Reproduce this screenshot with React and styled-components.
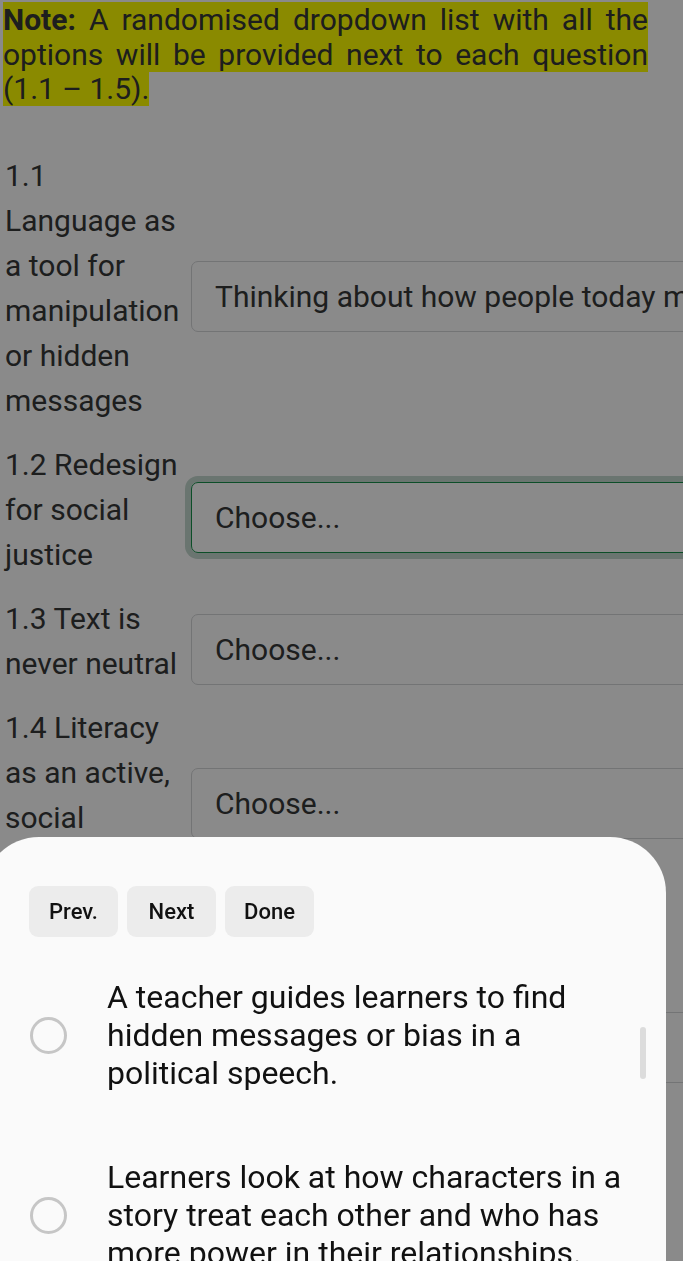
import React from 'react'
import styled, {createGlobalStyle} from 'styled-components'

const GlobalStyle = createGlobalStyle`
	html, body{
		margin: 0;
		padding: 0;
		background: #fff;
		overflow: hidden;
		font-family: Roboto, "Liberation Sans", sans-serif;
	}
`

const Page = styled.div`
	padding: 3px 0 0 3px;
	width: 900px;
	color: #363838;
`

const Note = styled.p`
	width: 645px;
	margin: 0 0 46px 0;
	font-size: 30px;
	line-height: 34.7px;
	text-align: justify;
	mark{
		background: #ffff00;
		color: inherit;
	}
`

const Questions = styled.div`
	display: flex;
	flex-direction: column;
	gap: 19px;
`

const Row = styled.div`
	display: flex;
	align-items: center;
`

const Label = styled.div`
	width: 182px;
	margin-right: 4px;
	padding-left: 2px;
	font-size: 30px;
	line-height: 45px;
`

const Select = styled.div`
	box-sizing: border-box;
	width: 620px;
	height: 71px;
	margin-top: 16px;
	display: flex;
	align-items: center;
	padding-left: 23px;
	border: 1px solid ${p => p.focused ? '#17904a' : '#d4d6d8'};
	border-radius: 7px;
	font-size: 30px;
	white-space: nowrap;
	overflow: hidden;
	box-shadow: ${p => p.focused ? '0 0 0 6px #c4d8cf' : 'none'};
`

const Backdrop = styled.div`
	position: fixed;
	inset: 0;
	background: rgba(0, 0, 0, 0.46);
`

const Sheet = styled.div`
	position: fixed;
	left: -17px;
	top: 837px;
	bottom: 0;
	width: 683px;
	box-sizing: border-box;
	padding: 49px 0 0 46px;
	background: #fafafa;
	border-radius: 56px 56px 0 0;
	color: #111;
`

const Toolbar = styled.div`
	display: flex;
	gap: 9px;
	margin-bottom: 8px;
`

const ToolButton = styled.button`
	width: 89px;
	height: 51px;
	border: none;
	border-radius: 9px;
	background: #ececec;
	color: #111;
	font-family: Roboto, "Liberation Sans", sans-serif;
	font-size: 22px;
	font-weight: 500;
	padding: 0;
`

const Option = styled.label`
	display: flex;
	align-items: center;
	padding: 33px 0;
`

const Radio = styled.span`
	box-sizing: border-box;
	flex: none;
	width: 37px;
	height: 37px;
	margin-left: 1px;
	border: 3px solid #c6c6c6;
	border-radius: 50%;
`

const OptionText = styled.span`
	width: 525px;
	margin-left: 40px;
	font-size: 32px;
	line-height: 38px;
`

const Thumb = styled.div`
	position: absolute;
	left: 657px;
	top: 190px;
	width: 6px;
	height: 52px;
	border-radius: 3px;
	background: #dcdcdc;
`

const questions = [
	{label: '1.1 Language as a tool for manipulation or hidden messages', value: 'Thinking about how people today might be influenced by what they read'},
	{label: '1.2 Redesign for social justice', value: 'Choose...', focused: true},
	{label: '1.3 Text is never neutral', value: 'Choose...'},
	{label: '1.4 Literacy as an active, social practice', value: 'Choose...'},
	{label: '1.5 Critical literacy and power relations in texts and society', value: 'Choose...'},
]

const options = [
	'A teacher guides learners to find hidden messages or bias in a political speech.',
	'Learners look at how characters in a story treat each other and who has more power in their relationships.',
]

export default function App(){
	return <>
		<GlobalStyle />
		<Page>
			<Note><mark><b>Note:</b> A randomised dropdown list with all the options will be provided next to each question (1.1 – 1.5).</mark></Note>
			<Questions>
				{questions.map(q => (
					<Row key={q.label}>
						<Label>{q.label.startsWith('1.1') ? <>1.1<br/>Language as a tool for manipulation or hidden messages</> : q.label}</Label>
						<Select focused={q.focused}>{q.value}</Select>
					</Row>
				))}
			</Questions>
		</Page>
		<Backdrop />
		<Sheet>
			<Toolbar>
				<ToolButton>Prev.</ToolButton>
				<ToolButton>Next</ToolButton>
				<ToolButton>Done</ToolButton>
			</Toolbar>
			{options.map(o => (
				<Option key={o}>
					<Radio />
					<OptionText>{o}</OptionText>
				</Option>
			))}
			<Thumb />
		</Sheet>
	</>
}
